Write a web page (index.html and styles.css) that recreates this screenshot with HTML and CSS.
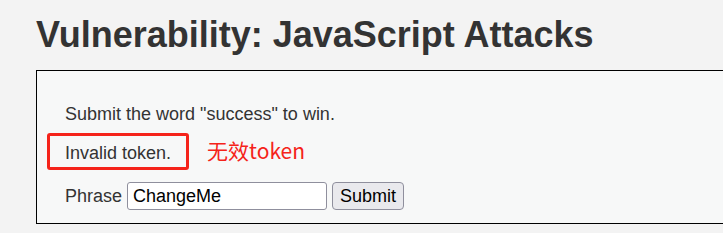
FILE: index.html
```html
<!DOCTYPE html>
<html lang="en">

<head>
    <meta charset="UTF-8">
    <title>Vulnerability: JavaScript Attacks</title>
    <link rel="stylesheet" href="styles.css">
</head>

<body>
    <div class="body-padded">
        <h1>Vulnerability: JavaScript Attacks</h1>

        <div class="vulnerable-code-area">
            <p>Submit the word "success" to win.</p>

            <p>
                <span class="message">Invalid token.<span class="marker"></span></span>
                <span class="note">无效token</span>
            </p>

            <form name="low_js" method="post" class="phrase-form">
                <label for="phrase">Phrase</label>
                <input type="text" name="phrase" value="ChangeMe" id="phrase" class="phrase-box">
                <input type="submit" id="send" name="send" value="Submit" class="submit-btn">
            </form>
        </div>
    </div>
</body>

</html>
```

FILE: styles.css
```css
body {
    font-family: "Liberation Sans", Arial, sans-serif;
    font-size: 18px;
    color: #333;
    margin: 0;
    padding: 0;
    background-color: #f3f3f3;
    overflow: hidden;
}

.body-padded {
    padding: 14px 0 0 36px;
}

.body-padded h1 {
    font-size: 36px;
    font-weight: bold;
    line-height: 41px;
    margin: 0 0 15px 0;
    color: #333;
}

.vulnerable-code-area {
    background-color: #f7f8f8;
    border: 1px solid #000;
    padding: 15px 28px 13px 28px;
    width: 760px;
}

.vulnerable-code-area p {
    margin: 18px 0;
    line-height: 21px;
}

.message {
    position: relative;
}

/* red box drawn round the message */
.marker {
    position: absolute;
    left: -18px;
    top: -10px;
    right: -18px;
    bottom: -7px;
    border: 3px solid #f5231a;
    border-radius: 3px;
}

.note {
    margin-left: 31px;
    font-family: "Noto Sans CJK SC", sans-serif;
    font-size: 21px;
    line-height: 14px;
    color: #f5231a;
}

.phrase-form {
    margin-top: 18px;
}

.phrase-box {
    font-family: "Liberation Sans", Arial, sans-serif;
    font-size: 18px;
    color: #000;
    width: 200px;
    height: 28px;
    box-sizing: border-box;
    padding: 2px 5px;
    border: 1px solid #8f8f9d;
    border-radius: 3px;
    background: #fff;
    margin: 0;
}

.submit-btn {
    font-family: "Liberation Sans", Arial, sans-serif;
    font-size: 18px;
    color: #000;
    height: 28px;
    box-sizing: border-box;
    padding: 2px 7px;
    border: 1px solid #8f8f9d;
    border-radius: 4px;
    background-color: #e9e9ed;
    margin: 0;
}
```
